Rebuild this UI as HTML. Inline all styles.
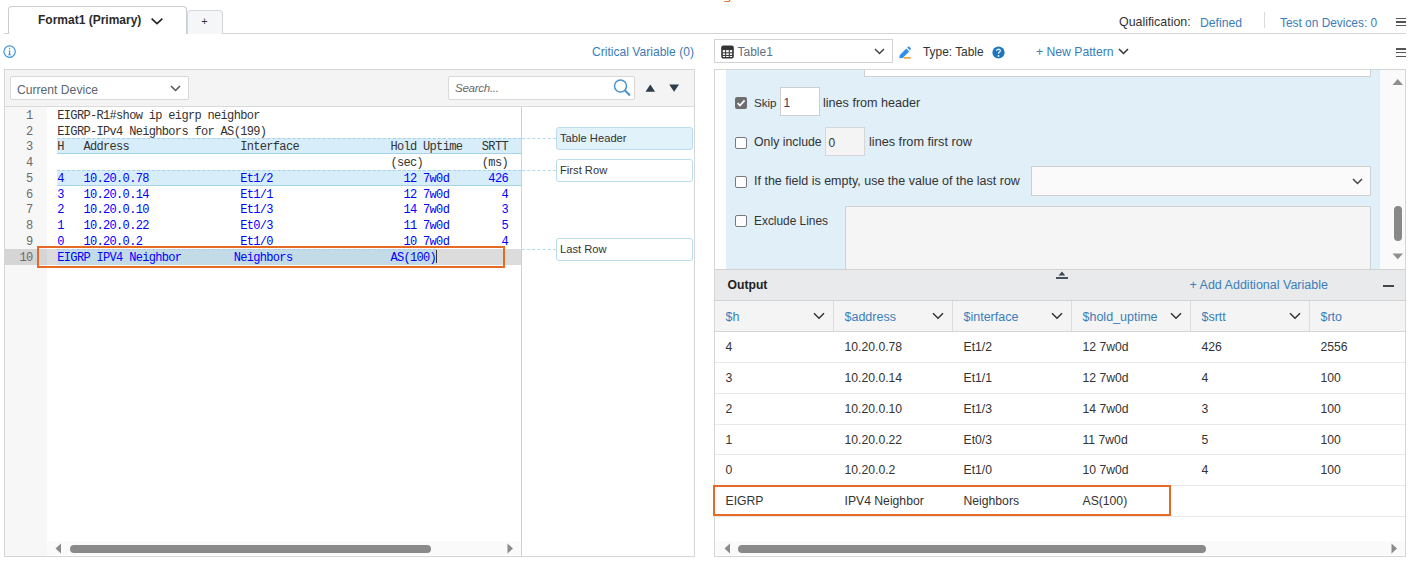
<!DOCTYPE html>
<html><head><meta charset="utf-8">
<style>
*{box-sizing:border-box;margin:0;padding:0}
html,body{width:1416px;height:564px;overflow:hidden;background:#fff}
body{position:relative;font-family:"Liberation Sans",sans-serif;color:#333;font-size:12px}
.a{position:absolute}
.t{position:absolute;white-space:pre;line-height:12px;font-size:12px}
.blue{color:#3a7db9}
.chev{position:absolute}
.code{position:absolute;left:57.3px;height:15.75px;line-height:15.75px;padding-top:2.1px;font-family:"Liberation Mono",monospace;font-size:12px;letter-spacing:-0.67px;white-space:pre}
.ln{position:absolute;left:5px;width:27.5px;text-align:right;height:15.75px;line-height:15.75px;padding-top:2.1px;font-family:"Liberation Mono",monospace;font-size:12px;letter-spacing:-0.67px;color:#6a6a6a;white-space:pre}
.lbl{position:absolute;left:556px;width:137px;height:23px;border:1px solid #b9dcee;border-radius:3px;background:#fff;font-size:11.2px;line-height:21px;padding-left:3px;color:#333}

</style></head><body>

<!-- ===== TOP BAR ===== -->
<div class="a" style="left:4px;top:33px;width:1402px;height:1px;background:#d3d6d9"></div>
<div class="a" style="left:8px;top:6px;width:179px;height:28px;background:#fff;border:1px solid #c9ccd0;border-bottom:none;border-radius:4px 4px 0 0"></div>
<div class="t" style="left:38px;top:14.3px;font-weight:bold;color:#2b2b2b">Format1 (Primary)</div>
<svg class="a" style="left:150px;top:16.5px" width="14" height="9" viewBox="0 0 14 9"><path d="M1.6 1.6 L7 6.6 L12.4 1.6" fill="none" stroke="#222" stroke-width="1.6"/></svg>
<div class="a" style="left:187px;top:10px;width:36px;height:24px;background:#f5f6f7;border:1px solid #d5d8db;border-bottom:none;border-radius:4px 4px 0 0"></div>
<div class="t" style="left:201.3px;top:15px;font-size:11px;color:#333">+</div>

<svg class="a" style="left:722px;top:0px" width="10" height="4" viewBox="0 0 10 4"><path d="M7.2 0 L8.4 0 Q8.4 1.9 6.2 2.1 L2.4 2.1 Q1.6 1.9 2 1.2 Q4.5 1.3 6 1.1 Q7.2 0.9 7.2 0 Z" fill="#e6631d"/></svg>

<div class="t" style="left:1119px;top:16px;color:#333;font-size:12.4px">Qualification:</div>
<div class="t blue" style="left:1200px;top:16.5px;font-size:12.2px">Defined</div>
<div class="a" style="left:1264px;top:12px;width:1px;height:16px;background:#dcdcdc"></div>
<div class="t blue" style="left:1280px;top:16.5px;font-size:11.9px">Test on Devices: 0</div>
<div class="a" style="left:1396px;top:17.5px;width:10px;height:1.4px;background:#555"></div>
<div class="a" style="left:1396px;top:21.3px;width:10px;height:1.4px;background:#555"></div>
<div class="a" style="left:1396px;top:25.1px;width:10px;height:1.4px;background:#555"></div>

<!-- info icon -->
<svg class="a" style="left:3px;top:45px" width="14" height="14" viewBox="0 0 14 14"><circle cx="6.6" cy="6.6" r="5.7" fill="none" stroke="#3f92d8" stroke-width="1.2"/><circle cx="6.6" cy="3.7" r="0.75" fill="#3f92d8"/><path d="M5.6 5.4 H7.2 V9.6 H8.2 V10.3 H5 V9.6 H6 V6.1 H5.6 Z" fill="#3f92d8"/></svg>

<div class="t blue" style="left:592px;top:46px;font-size:12.1px">Critical Variable (0)</div>

<!-- ===== LEFT PANEL ===== -->
<div class="a" style="left:4px;top:69px;width:691px;height:488px;border:1px solid #d6d6d6;background:#fff"></div>
<div class="a" style="left:5px;top:70px;width:689px;height:37px;background:#f4f4f4;border-bottom:1px solid #dadada"></div>
<div class="a" style="left:10px;top:76px;width:179px;height:24px;background:#fff;border:1px solid #d9d9d9;border-radius:2px"></div>
<div class="t" style="left:17px;top:84px;color:#5b6670;font-size:12.15px">Current Device</div>
<svg class="a" style="left:170px;top:85px" width="11" height="7" viewBox="0 0 11 7"><path d="M1 1 L5.5 5.5 L10 1" fill="none" stroke="#555" stroke-width="1.5"/></svg>
<div class="a" style="left:448px;top:76px;width:187px;height:24px;background:#fff;border:1px solid #d9d9d9;border-radius:2px"></div>
<div class="t" style="left:455px;top:82.3px;font-style:italic;color:#6a6a6a;font-size:11.6px;letter-spacing:-0.3px;line-height:12px">Search...</div>
<svg class="a" style="left:612px;top:78px" width="20" height="20" viewBox="0 0 20 20"><circle cx="8.5" cy="8" r="6" fill="none" stroke="#4a94cc" stroke-width="1.5"/><path d="M12.8 12.3 L18 17.5" stroke="#4a94cc" stroke-width="2"/></svg>
<svg class="a" style="left:645px;top:84px" width="11" height="8" viewBox="0 0 11 8"><path d="M0.5 7.7 L5.3 0.5 L10.1 7.7 Z" fill="#2e3d4b"/></svg>
<svg class="a" style="left:669px;top:84px" width="11" height="8" viewBox="0 0 11 8"><path d="M0.2 0.5 L10 0.5 L5.1 7.7 Z" fill="#2e3d4b"/></svg>

<!-- gutter -->
<div class="a" style="left:5px;top:107px;width:42px;height:449px;background:#f7f7f7"></div>
<!-- splitter -->
<div class="a" style="left:521px;top:107px;width:1px;height:449px;background:#d0d0d0"></div>

<!-- code highlights -->
<div class="a" style="left:5px;top:249px;width:42px;height:16px;background:#d5d5d5"></div>
<div class="a" style="left:47px;top:249px;width:474px;height:16px;background:#dcdcdc"></div>
<div class="a" style="left:57px;top:249px;width:379px;height:16px;background:#c3dbe7;border-top:1px dashed #a9d0e4"></div>
<div class="a" style="left:57px;top:138.30px;width:464px;height:16.05px;background:#d7eefa;border-top:1px dashed #a6d3ea;border-bottom:1px solid #a6d3ea"></div>
<div class="a" style="left:57px;top:169.80px;width:464px;height:16.05px;background:#d7eefa;border-top:1px dashed #a6d3ea;border-bottom:1px solid #a6d3ea"></div>
<div class="a" style="left:522px;top:138.30px;width:34px;height:1px;border-top:1px dashed #b3dbee"></div>
<div class="a" style="left:522px;top:169.80px;width:34px;height:1px;border-top:1px dashed #b3dbee"></div>
<div class="a" style="left:522px;top:248.55px;width:34px;height:1px;border-top:1px dashed #b3dbee"></div>
<div class="a" style="left:436px;top:249.55px;width:1.2px;height:13.75px;background:#333"></div>
<!-- code text -->
<div class="code" style="top:106.80px;color:#333">EIGRP-R1#show ip eigrp neighbor</div>
<div class="ln" style="top:106.80px">1</div>
<div class="code" style="top:122.55px;color:#333">EIGRP-IPv4 Neighbors for AS(199)</div>
<div class="ln" style="top:122.55px">2</div>
<div class="code" style="top:138.30px;color:#333">H   Address                 Interface              Hold Uptime   SRTT</div>
<div class="ln" style="top:138.30px">3</div>
<div class="code" style="top:154.05px;color:#333">                                                   (sec)         (ms)</div>
<div class="ln" style="top:154.05px">4</div>
<div class="code" style="top:169.80px;color:#0000ff">4   10.20.0.78              Et1/2                    12 7w0d      426</div>
<div class="ln" style="top:169.80px">5</div>
<div class="code" style="top:185.55px;color:#0000ff">3   10.20.0.14              Et1/1                    12 7w0d        4</div>
<div class="ln" style="top:185.55px">6</div>
<div class="code" style="top:201.30px;color:#0000ff">2   10.20.0.10              Et1/3                    14 7w0d        3</div>
<div class="ln" style="top:201.30px">7</div>
<div class="code" style="top:217.05px;color:#0000ff">1   10.20.0.22              Et0/3                    11 7w0d        5</div>
<div class="ln" style="top:217.05px">8</div>
<div class="code" style="top:232.80px;color:#0000ff">0   10.20.0.2               Et1/0                    10 7w0d        4</div>
<div class="ln" style="top:232.80px">9</div>
<div class="code" style="top:248.55px;color:#0000ff">EIGRP IPV4 Neighbor        Neighbors               AS(100)</div>
<div class="ln" style="top:248.55px">10</div>

<!-- labels -->
<div class="lbl" style="top:127px;background:#e2f2fa">Table Header</div>
<div class="lbl" style="top:159px">First Row</div>
<div class="lbl" style="top:238px">Last Row</div>
<!-- orange box left -->
<div class="a" style="left:37px;top:246px;width:468px;height:22px;border:2px solid #e46a25"></div>
<!-- h scrollbar left -->
<div class="a" style="left:47px;top:541px;width:474px;height:14px;background:#fafafa"></div>
<svg class="a" style="left:55px;top:543px" width="7" height="11" viewBox="0 0 7 11"><path d="M6 0.5 L6 10.5 L0.5 5.5 Z" fill="#8a8a8a"/></svg>
<div class="a" style="left:69.5px;top:544.5px;width:361.5px;height:8.5px;border-radius:4.5px;background:#8a8a8a"></div>
<svg class="a" style="left:507px;top:543px" width="7" height="11" viewBox="0 0 7 11"><path d="M0.5 0.5 L0.5 10.5 L6 5.5 Z" fill="#8a8a8a"/></svg>

<!-- ===== RIGHT PANEL HEADER ===== -->
<div class="a" style="left:714px;top:39px;width:179px;height:24px;background:#fff;border:1px solid #d3d3d3"></div>
<svg class="a" style="left:721px;top:45px" width="13" height="14" viewBox="0 0 13 14"><rect x="1" y="1.2" width="11" height="11.6" rx="1.3" fill="none" stroke="#333" stroke-width="1.6"/><path d="M1 4.6 H12 M1 7.8 H12 M1 10.4 H12 M4.6 4.6 V12.8 M8.3 4.6 V12.8" stroke="#333" stroke-width="1"/><rect x="1" y="1.2" width="11" height="3.4" fill="#333"/></svg>
<div class="t" style="left:737.5px;top:45.8px;color:#5f7183;font-size:12px">Table1</div>
<svg class="a" style="left:874px;top:48px" width="11" height="7" viewBox="0 0 11 7"><path d="M1 1 L5.5 5.5 L10 1" fill="none" stroke="#444" stroke-width="1.5"/></svg>
<svg class="a" style="left:898px;top:45.5px" width="14" height="14" viewBox="0 0 14 14"><path d="M1.2 12.2 L1.8 9 L8.3 2.5 L11.2 5.4 L4.7 11.9 Z" fill="#2f8ff0"/><path d="M9.2 1.6 L10 0.8 Q10.7 0.2 11.4 0.8 L12.6 2 Q13.2 2.7 12.6 3.4 L11.9 4.2 Z" fill="#2f8ff0"/><rect x="5.6" y="11" width="7" height="1.7" fill="#f4a63c"/></svg>
<div class="t" style="left:923px;top:46px;color:#333;font-size:11.9px">Type: Table</div>
<svg class="a" style="left:992px;top:46.3px" width="13" height="13" viewBox="0 0 13 13"><circle cx="6.5" cy="6.5" r="6.1" fill="#1d77bd"/><path d="M4.7 5 Q4.7 3.1 6.5 3.1 Q8.3 3.1 8.3 4.7 Q8.3 5.7 7.2 6.3 Q6.5 6.7 6.5 7.8" fill="none" stroke="#fff" stroke-width="1.2"/><circle cx="6.5" cy="9.9" r="0.9" fill="#fff"/></svg>
<div class="t blue" style="left:1036px;top:46px;font-size:12.2px">+ New Pattern</div>
<svg class="a" style="left:1118px;top:47.5px" width="11" height="7" viewBox="0 0 11 7"><path d="M1 1 L5.5 5.5 L10 1" fill="none" stroke="#333" stroke-width="1.5"/></svg>
<div class="a" style="left:1396px;top:48.3px;width:10px;height:1.4px;background:#555"></div>
<div class="a" style="left:1396px;top:52.1px;width:10px;height:1.4px;background:#555"></div>
<div class="a" style="left:1396px;top:55.9px;width:10px;height:1.4px;background:#555"></div>

<!-- ===== RIGHT CONTENT BOX ===== -->
<div class="a" style="left:714px;top:69px;width:692px;height:488px;border:1px solid #d6d6d6;background:#fff"></div>
<div class="a" style="left:726px;top:70px;width:654px;height:199px;background:#e0eff8"></div>
<div class="a" style="left:1380px;top:70px;width:25px;height:199px;background:#fafafa"></div>
<div class="a" style="left:864px;top:70px;width:507px;height:7px;background:#fff;border:1px solid #d0d0d0;border-top:none"></div>
<div class="a" style="left:714px;top:69px;width:692px;height:1px;background:#d6d6d6"></div>

<!-- row 1 -->
<div class="a" style="left:735px;top:97px;width:12px;height:12px;border-radius:2px;background:#6e6e6e"></div>
<svg class="a" style="left:735px;top:97px" width="12" height="12" viewBox="0 0 12 12"><path d="M2.6 6.2 L4.9 8.6 L9.6 3.4" fill="none" stroke="#fff" stroke-width="1.7"/></svg>
<div class="t" style="left:754px;top:96.5px;font-size:11.6px">Skip</div>
<div class="a" style="left:780px;top:87px;width:40px;height:29px;background:#fff;border:1px solid #cfcfcf"></div>
<div class="t" style="left:783.5px;top:96.5px;color:#4a3a50">1</div>
<div class="t" style="left:823px;top:96.5px;font-size:12.6px">lines from header</div>

<!-- row 2 -->
<div class="a" style="left:735px;top:136.5px;width:12px;height:12px;border-radius:2px;background:#fff;border:1px solid #7a7a7a"></div>
<div class="t" style="left:754px;top:136px;font-size:12.3px">Only include</div>
<div class="a" style="left:825px;top:126.5px;width:40px;height:29px;background:#f4f4f4;border:1px solid #d6d6d6"></div>
<div class="t" style="left:828.5px;top:136.5px">0</div>
<div class="t" style="left:869px;top:136px;font-size:12.7px">lines from first row</div>

<!-- row 3 -->
<div class="a" style="left:735px;top:175.7px;width:12px;height:12px;border-radius:2px;background:#fff;border:1px solid #7a7a7a"></div>
<div class="t" style="left:754px;top:175px;font-size:12.5px">If the field is empty, use the value of the last row</div>
<div class="a" style="left:1031px;top:166px;width:340px;height:29.5px;background:#fafafa;border:1px solid #cfcfcf"></div>
<svg class="a" style="left:1351.5px;top:177.5px" width="11" height="7" viewBox="0 0 11 7"><path d="M1 1 L5.5 5.5 L10 1" fill="none" stroke="#444" stroke-width="1.5"/></svg>

<!-- row 4 -->
<div class="a" style="left:735px;top:215.3px;width:12px;height:12px;border-radius:2px;background:#fff;border:1px solid #7a7a7a"></div>
<div class="t" style="left:754px;top:215px;font-size:11.9px">Exclude Lines</div>
<div class="a" style="left:844.5px;top:206px;width:526.5px;height:70px;background:#f5f5f5;border:1px solid #d0d0d0"></div>

<!-- v scrollbar -->
<svg class="a" style="left:1392px;top:78px" width="12" height="8" viewBox="0 0 12 8"><path d="M0.5 7 L11 7 L5.75 1 Z" fill="#8f8f8f"/></svg>
<div class="a" style="left:1393.6px;top:206px;width:8.4px;height:35px;border-radius:4.2px;background:#888"></div>
<svg class="a" style="left:1392px;top:253px" width="12" height="7" viewBox="0 0 12 7"><path d="M0.5 0.5 L11 0.5 L5.75 6.3 Z" fill="#8f8f8f"/></svg>

<!-- ===== OUTPUT ===== -->
<div class="a" style="left:715px;top:269px;width:690px;height:32px;background:#e9eaec;border-top:1px solid #d2d2d2;border-bottom:1px solid #d2d2d2"></div>
<div class="t" style="left:727.5px;top:279px;font-weight:bold;color:#222;font-size:12.2px">Output</div>
<svg class="a" style="left:1055px;top:270px" width="14" height="10" viewBox="0 0 14 10"><path d="M3.6 5.6 L7 1.4 L10.2 5.6 Z" fill="#37424d"/><rect x="1" y="7" width="12" height="2" fill="#47525c"/></svg>
<div class="t blue" style="left:1189.5px;top:279px;font-size:12.5px">+ Add Additional Variable</div>
<div class="a" style="left:1383px;top:285px;width:10.5px;height:1.6px;background:#444"></div>

<div class="a" style="left:715px;top:301px;width:690px;height:31px;background:#f4f4f4;border-bottom:1px solid #d6d6d6"></div>
<div class="t blue" style="left:725.5px;top:310.5px;color:#3b7eba;font-size:12.5px">$h</div>
<svg class="a" style="left:812.5px;top:312px" width="12" height="8" viewBox="0 0 12 8"><path d="M1 1.2 L6 6.2 L11 1.2" fill="none" stroke="#333" stroke-width="1.5"/></svg>
<div class="a" style="left:833.0px;top:301px;width:1px;height:30px;background:#dcdcdc"></div>
<div class="t blue" style="left:844.5px;top:310.5px;color:#3b7eba;font-size:12.5px">$address</div>
<svg class="a" style="left:931.5px;top:312px" width="12" height="8" viewBox="0 0 12 8"><path d="M1 1.2 L6 6.2 L11 1.2" fill="none" stroke="#333" stroke-width="1.5"/></svg>
<div class="a" style="left:952.0px;top:301px;width:1px;height:30px;background:#dcdcdc"></div>
<div class="t blue" style="left:963.5px;top:310.5px;color:#3b7eba;font-size:12.5px">$interface</div>
<svg class="a" style="left:1050.5px;top:312px" width="12" height="8" viewBox="0 0 12 8"><path d="M1 1.2 L6 6.2 L11 1.2" fill="none" stroke="#333" stroke-width="1.5"/></svg>
<div class="a" style="left:1071.0px;top:301px;width:1px;height:30px;background:#dcdcdc"></div>
<div class="t blue" style="left:1082.5px;top:310.5px;color:#3b7eba;font-size:12.5px">$hold_uptime</div>
<svg class="a" style="left:1169.5px;top:312px" width="12" height="8" viewBox="0 0 12 8"><path d="M1 1.2 L6 6.2 L11 1.2" fill="none" stroke="#333" stroke-width="1.5"/></svg>
<div class="a" style="left:1190.0px;top:301px;width:1px;height:30px;background:#dcdcdc"></div>
<div class="t blue" style="left:1201.5px;top:310.5px;color:#3b7eba;font-size:12.5px">$srtt</div>
<svg class="a" style="left:1288.5px;top:312px" width="12" height="8" viewBox="0 0 12 8"><path d="M1 1.2 L6 6.2 L11 1.2" fill="none" stroke="#333" stroke-width="1.5"/></svg>
<div class="a" style="left:1309.0px;top:301px;width:1px;height:30px;background:#dcdcdc"></div>
<div class="t blue" style="left:1320.5px;top:310.5px;color:#3b7eba;font-size:12.5px">$rto</div>
<div class="a" style="left:715px;top:361.85px;width:690px;height:1px;background:#e8e8e8"></div>
<div class="t" style="left:725.5px;top:341.00px;font-size:12.2px">4</div>
<div class="t" style="left:844.5px;top:341.00px;font-size:12.2px">10.20.0.78</div>
<div class="t" style="left:963.5px;top:341.00px;font-size:12.2px">Et1/2</div>
<div class="t" style="left:1082.5px;top:341.00px;font-size:12.2px">12 7w0d</div>
<div class="t" style="left:1201.5px;top:341.00px;font-size:12.2px">426</div>
<div class="t" style="left:1320.5px;top:341.00px;font-size:12.2px">2556</div>
<div class="a" style="left:715px;top:392.70px;width:690px;height:1px;background:#e8e8e8"></div>
<div class="t" style="left:725.5px;top:371.85px;font-size:12.2px">3</div>
<div class="t" style="left:844.5px;top:371.85px;font-size:12.2px">10.20.0.14</div>
<div class="t" style="left:963.5px;top:371.85px;font-size:12.2px">Et1/1</div>
<div class="t" style="left:1082.5px;top:371.85px;font-size:12.2px">12 7w0d</div>
<div class="t" style="left:1201.5px;top:371.85px;font-size:12.2px">4</div>
<div class="t" style="left:1320.5px;top:371.85px;font-size:12.2px">100</div>
<div class="a" style="left:715px;top:423.55px;width:690px;height:1px;background:#e8e8e8"></div>
<div class="t" style="left:725.5px;top:402.70px;font-size:12.2px">2</div>
<div class="t" style="left:844.5px;top:402.70px;font-size:12.2px">10.20.0.10</div>
<div class="t" style="left:963.5px;top:402.70px;font-size:12.2px">Et1/3</div>
<div class="t" style="left:1082.5px;top:402.70px;font-size:12.2px">14 7w0d</div>
<div class="t" style="left:1201.5px;top:402.70px;font-size:12.2px">3</div>
<div class="t" style="left:1320.5px;top:402.70px;font-size:12.2px">100</div>
<div class="a" style="left:715px;top:454.40px;width:690px;height:1px;background:#e8e8e8"></div>
<div class="t" style="left:725.5px;top:433.55px;font-size:12.2px">1</div>
<div class="t" style="left:844.5px;top:433.55px;font-size:12.2px">10.20.0.22</div>
<div class="t" style="left:963.5px;top:433.55px;font-size:12.2px">Et0/3</div>
<div class="t" style="left:1082.5px;top:433.55px;font-size:12.2px">11 7w0d</div>
<div class="t" style="left:1201.5px;top:433.55px;font-size:12.2px">5</div>
<div class="t" style="left:1320.5px;top:433.55px;font-size:12.2px">100</div>
<div class="a" style="left:715px;top:485.25px;width:690px;height:1px;background:#e8e8e8"></div>
<div class="t" style="left:725.5px;top:464.40px;font-size:12.2px">0</div>
<div class="t" style="left:844.5px;top:464.40px;font-size:12.2px">10.20.0.2</div>
<div class="t" style="left:963.5px;top:464.40px;font-size:12.2px">Et1/0</div>
<div class="t" style="left:1082.5px;top:464.40px;font-size:12.2px">10 7w0d</div>
<div class="t" style="left:1201.5px;top:464.40px;font-size:12.2px">4</div>
<div class="t" style="left:1320.5px;top:464.40px;font-size:12.2px">100</div>
<div class="a" style="left:715px;top:516.10px;width:690px;height:1px;background:#e8e8e8"></div>
<div class="t" style="left:725.5px;top:495.25px;font-size:12.2px">EIGRP</div>
<div class="t" style="left:844.5px;top:495.25px;font-size:12.2px">IPV4 Neighbor</div>
<div class="t" style="left:963.5px;top:495.25px;font-size:12.2px">Neighbors</div>
<div class="t" style="left:1082.5px;top:495.25px;font-size:12.2px">AS(100)</div>

<div class="a" style="left:713px;top:485px;width:458px;height:31px;border:2px solid #e46a25"></div>
<!-- h scrollbar right -->
<div class="a" style="left:715px;top:541px;width:690px;height:14px;background:#fafafa"></div>
<svg class="a" style="left:724px;top:543px" width="7" height="11" viewBox="0 0 7 11"><path d="M6 0.5 L6 10.5 L0.5 5.5 Z" fill="#8a8a8a"/></svg>
<div class="a" style="left:738px;top:544.5px;width:467.5px;height:8.5px;border-radius:4.5px;background:#8a8a8a"></div>
<svg class="a" style="left:1391px;top:543px" width="7" height="11" viewBox="0 0 7 11"><path d="M0.5 0.5 L0.5 10.5 L6 5.5 Z" fill="#8a8a8a"/></svg>

</body></html>
